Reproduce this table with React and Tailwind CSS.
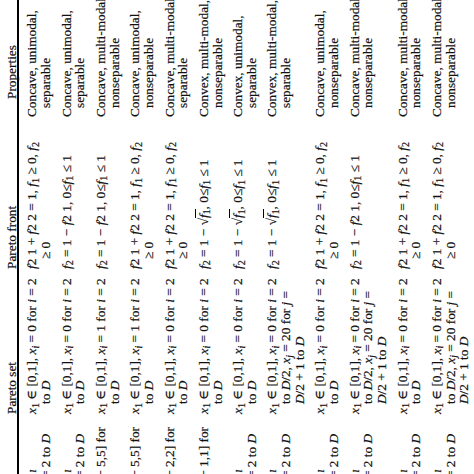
import React from 'react';

const COLS = "grid grid-cols-[54px_145px_152px_123px]";

function Col0({ type }) {
  if (type === 'A') {
    return (
      <div className="flex flex-col items-end">
        <div className="whitespace-nowrap mr-[49px]">
          <i>x</i><sub>1</sub> ∈ [0,1], <i>x</i><sub><i>i</i></sub> ∈ [0,1] for <i>ı</i>
        </div>
        <div className="whitespace-nowrap mr-[14px]">= 2 to <i>D</i></div>
      </div>
    );
  }
  const r = type === 'B5' ? '5,5' : type === 'B2' ? '2,2' : '1,1';
  return (
    <div className="flex flex-col items-end">
      <div className="whitespace-nowrap mr-[7px]">
        <i>x</i><sub>1</sub> ∈ [0,1], <i>x</i><sub><i>i</i></sub> ∈ [− {r}] for
      </div>
    </div>
  );
}

function PSet({ type }) {
  const v = type === 's1' ? '1' : '0';
  return (
    <div className="pl-[6px] whitespace-nowrap">
      <div>
        <i>x</i><sub>1</sub> ∈ [0,1], <i>x</i><sub><i>i</i></sub> = {v} for <i>i</i> = 2
      </div>
      {type === 's3' ? (
        <>
          <div className="pl-[10px]">
            to <i>D</i>/2, <i>x</i><sub><i>j</i></sub> = 20 for <i>j</i> =
          </div>
          <div className="pl-[10px]">
            <i>D</i>/2 + 1 to <i>D</i>
          </div>
        </>
      ) : (
        <div className="pl-[10px]">
          to <i>D</i>
        </div>
      )}
    </div>
  );
}

function Front({ type }) {
  if (type === 'circle') {
    return (
      <div className="pl-[6px] whitespace-nowrap">
        <div>
          <i>f</i>2 1 + <i>f</i>2 2 = 1, <i>f</i><sub>1</sub> ≥ 0, <i>f</i><sub>2</sub>
        </div>
        <div className="pl-[10px]">≥ 0</div>
      </div>
    );
  }
  if (type === 'lin') {
    return (
      <div className="pl-[6px] whitespace-nowrap">
        <i>f</i><sub>2</sub> = 1 − <i>f</i>2 1, 0≤<i>f</i><sub>1</sub> ≤ 1
      </div>
    );
  }
  return (
    <div className="pl-[6px] whitespace-nowrap">
      <i>f</i><sub>2</sub> = 1 − √<span className="border-t border-black"><i>f</i><sub>1</sub></span>, 0≤<i>f</i><sub>1</sub> ≤ 1
    </div>
  );
}

function Props({ a, b }) {
  return (
    <div className="pl-[6px] whitespace-nowrap">
      <div>{a}</div>
      <div className="pl-[9px]">{b}</div>
    </div>
  );
}

const rows = [
  { c0: 'A', set: 's0', front: 'circle', p1: 'Concave, unimodal,', p2: 'separable' },
  { c0: 'A', set: 's0', front: 'lin', p1: 'Concave, unimodal,', p2: 'separable' },
  { c0: 'B5', set: 's1', front: 'lin', p1: 'Concave, multi-modal,', p2: 'nonseparable' },
  { c0: 'B5', set: 's1', front: 'circle', p1: 'Concave, unimodal,', p2: 'nonseparable' },
  { c0: 'B2', set: 's0', front: 'circle', p1: 'Concave, multi-modal,', p2: 'separable' },
  { c0: 'B1', set: 's0', front: 'sqrt', p1: 'Convex, multi-modal,', p2: 'nonseparable' },
  { c0: 'A', set: 's0', front: 'sqrt', p1: 'Convex, unimodal,', p2: 'separable' },
  { c0: 'A', set: 's3', front: 'sqrt', p1: 'Convex, multi-modal,', p2: 'separable' },
  { c0: 'A', set: 's0', front: 'circle', p1: 'Concave, unimodal,', p2: 'nonseparable' },
  { c0: 'A', set: 's3', front: 'lin', p1: 'Concave, multi-modal,', p2: 'nonseparable' },
  { c0: 'A', set: 's0', front: 'circle', p1: 'Concave, multi-modal,', p2: 'nonseparable' },
  { c0: 'A', set: 's3', front: 'circle', p1: 'Concave, multi-modal,', p2: 'nonseparable' },
];

export default function App() {
  return (
    <div className="w-[474px] h-[474px] overflow-hidden bg-white">
      <div className="w-[474px] h-[474px] -rotate-90 font-['Liberation_Serif','DejaVu_Serif',serif] text-[13.3px] leading-[13.7px] text-[#111] [-webkit-text-stroke:0.2px_#111]">
        <div className={`${COLS} h-[19px] pt-[4.7px] border-b-2 border-black`}>
          <div></div>
          <div className="pl-[6px] whitespace-nowrap">Pareto set</div>
          <div className="pl-[6px] whitespace-nowrap">Pareto front</div>
          <div className="pl-[24px] whitespace-nowrap">Properties</div>
        </div>
        <div className="pt-[3px]">
          {rows.map((r, i) => (
            <div key={i} className={`${COLS} py-[3.45px]`}>
              <Col0 type={r.c0} />
              <PSet type={r.set} />
              <Front type={r.front} />
              <Props a={r.p1} b={r.p2} />
            </div>
          ))}
        </div>
      </div>
    </div>
  );
}
